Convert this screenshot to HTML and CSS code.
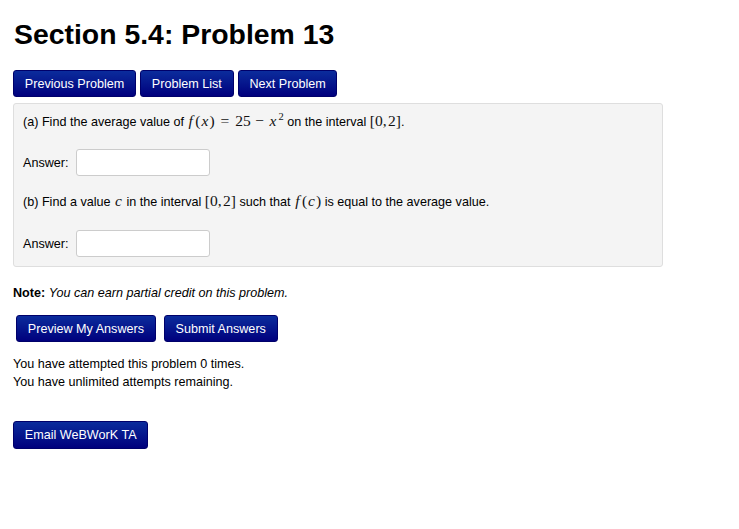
FILE: index.html
```html
<!DOCTYPE html>
<html lang="en">
<head>
    <meta charset="UTF-8">
    <title>Section 5.4: Problem 13</title>
    <link rel="stylesheet" href="styles.css">
</head>
<body>
    <div class="page">
        <h1>Section 5.4: Problem 13</h1>

        <div class="nav-buttons">
            <a class="btn" href="#">Previous Problem</a>
            <a class="btn" href="#">Problem List</a>
            <a class="btn" href="#">Next Problem</a>
        </div>

        <div class="problem">
            <p class="part-a">(a) Find the average value of <span class="math"><i class="fn">f</i>(<i class="var">x</i>)<span class="rel">=</span>25<span class="bin">&minus;</span><i class="var">x</i><sup>2</sup></span> on the interval <span class="math">[0,<span class="thin"></span>2]</span>.</p>
            <div class="answer-row">
                <label for="ans1">Answer:</label>
                <input type="text" id="ans1" class="answer">
            </div>
            <p class="part-b">(b) Find a value <span class="math"><i class="var">c</i></span> in the interval <span class="math">[0,<span class="thin"></span>2]</span> such that <span class="math"><i class="fn">f</i>(<i class="var">c</i>)</span> is equal to the average value.</p>
            <div class="answer-row last">
                <label for="ans2">Answer:</label>
                <input type="text" id="ans2" class="answer">
            </div>
        </div>

        <p class="note"><b>Note:</b> <i>You can earn partial credit on this problem.</i></p>

        <div class="submit-buttons">
            <button class="btn">Preview My Answers</button>
            <button class="btn">Submit Answers</button>
        </div>

        <div class="attempts">
            You have attempted this problem 0 times.<br>
            You have unlimited attempts remaining.
        </div>

        <div class="email">
            <button class="btn">Email WeBWorK TA</button>
        </div>
    </div>
</body>
</html>
```

FILE: styles.css
```css
body {
    margin: 0;
    font-family: "Liberation Sans", Arial, sans-serif;
    font-size: 12.6px;
    line-height: 18px;
    color: #000;
    background: #fff;
}
.page {
    padding: 0 13px;
}
h1 {
    font-size: 28.4px;
    line-height: 32px;
    font-weight: bold;
    margin: 18px 0 0 0;
    padding-left: 1px;
}
p {
    margin: 0;
}
.btn {
    display: inline-block;
    font-family: "Liberation Sans", Arial, sans-serif;
    font-size: 12.6px;
    line-height: 18px;
    padding: 3.6px 10.8px;
    color: #fff;
    text-decoration: none;
    border: 1px solid #00006a;
    border-radius: 3px;
    background-image: linear-gradient(to bottom, #0b2c9c, #00007d);
    cursor: pointer;
}
.nav-buttons {
    display: flex;
    gap: 4px;
    margin-top: 20px;
}
.problem {
    margin-top: 6px;
    width: 630px;
    padding: 9px 9px 9px 9px;
    background-color: #f4f4f4;
    border: 1px solid #dedede;
    border-radius: 3px;
    display: flex;
    flex-direction: column;
}
.problem p {
    height: 18px;
}
.problem .part-b {
    margin-top: 17px;
}
.answer-row {
    display: flex;
    align-items: center;
    gap: 7px;
    margin-top: 18px;
}
.answer-row.last {
    margin-top: 19px;
}
.math {
    font-family: "Liberation Serif", "Times New Roman", serif;
    font-size: 15.5px;
    line-height: 14px;
    color: #111;
}
.math .fn {
    padding: 0 2.5px 0 1px;
}
.math .var {
    padding: 0 1px;
}
.math .rel {
    margin: 0 6px;
}
.math .bin {
    margin: 0 4.5px;
}
.math .thin {
    display: inline-block;
    width: 1.5px;
}
.math sup {
    font-size: 10.5px;
    line-height: 0;
    padding-left: 1px;
}
.answer {
    width: 134px;
    height: 27px;
    box-sizing: border-box;
    border: 1px solid #ccc;
    border-radius: 3px;
    background: #fff;
    margin: 0;
    padding: 2px 5px;
}
.note {
    margin-top: 17px;
}
.submit-buttons {
    display: flex;
    gap: 8px;
    margin-top: 13px;
    padding-left: 3px;
}
.attempts {
    margin-top: 13px;
}
.email {
    margin-top: 30px;
}
```
